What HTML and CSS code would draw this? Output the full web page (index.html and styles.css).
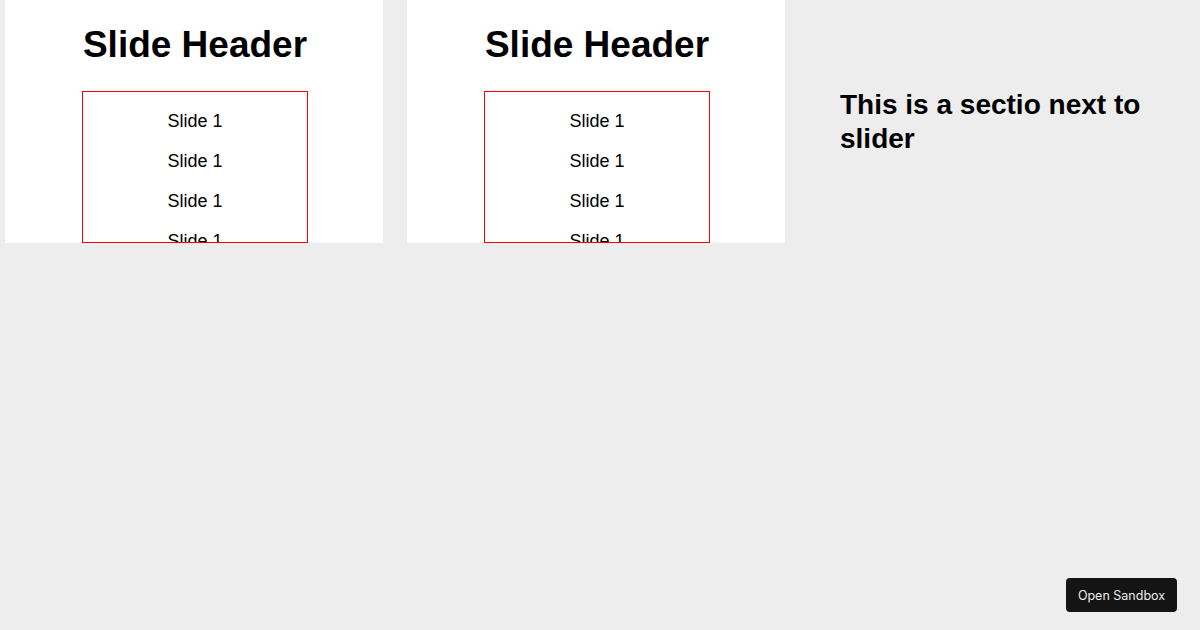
FILE: index.html
```html
<!DOCTYPE html>
<html>
<head>
<meta charset="utf-8">
<link rel="stylesheet" href="styles.css">
</head>
<body>
<div class="page">
  <div class="panel">
    <div class="inner">
      <h1 class="title">Slide Header</h1>
      <div class="slider">
        <div class="slide">Slide 1</div>
        <div class="slide">Slide 1</div>
        <div class="slide">Slide 1</div>
        <div class="slide">Slide 1</div>
      </div>
    </div>
  </div>
  <div class="panel">
    <div class="inner">
      <h1 class="title">Slide Header</h1>
      <div class="slider">
        <div class="slide">Slide 1</div>
        <div class="slide">Slide 1</div>
        <div class="slide">Slide 1</div>
        <div class="slide">Slide 1</div>
      </div>
    </div>
  </div>
  <div class="side">
    <h2 class="side-title">This is a sectio next to slider</h2>
  </div>
</div>
<button class="sandbox">Open Sandbox</button>
</body>
</html>
```

FILE: styles.css
```css
html, body {
  margin: 0;
  padding: 0;
  background: #ededed;
  font-family: "Liberation Sans", Arial, sans-serif;
  color: #000;
}
.page {
  display: flex;
  gap: 24px;
  padding: 0 5px;
  align-items: flex-start;
}
.panel {
  width: 378px;
  height: 243px;
  background: #fff;
  flex: none;
}
.inner {
  width: 226px;
  margin-left: 77px;
  padding-top: 24px;
}
.title {
  margin: 0;
  font-size: 37px;
  line-height: 42px;
  font-weight: bold;
  text-align: center;
  white-space: nowrap;
}
.slider {
  box-sizing: border-box;
  margin-top: 25px;
  height: 152px;
  border: 1px solid #ff0000;
  overflow: hidden;
  padding-top: 9px;
}
.slide {
  font-size: 18px;
  line-height: 40px;
  text-align: center;
}
.side {
  flex: 1;
  padding: 0 31px;
}
.side-title {
  margin: 88px 0 0;
  font-size: 28px;
  line-height: 34px;
  font-weight: bold;
}
.sandbox {
  position: fixed;
  right: 23px;
  bottom: 18px;
  width: 111px;
  height: 34px;
  background: #141414;
  color: #eeeeee;
  border: none;
  border-radius: 4px;
  font-family: Inter, "Liberation Sans", sans-serif;
  font-size: 12.5px;
  padding: 0;
}
```
